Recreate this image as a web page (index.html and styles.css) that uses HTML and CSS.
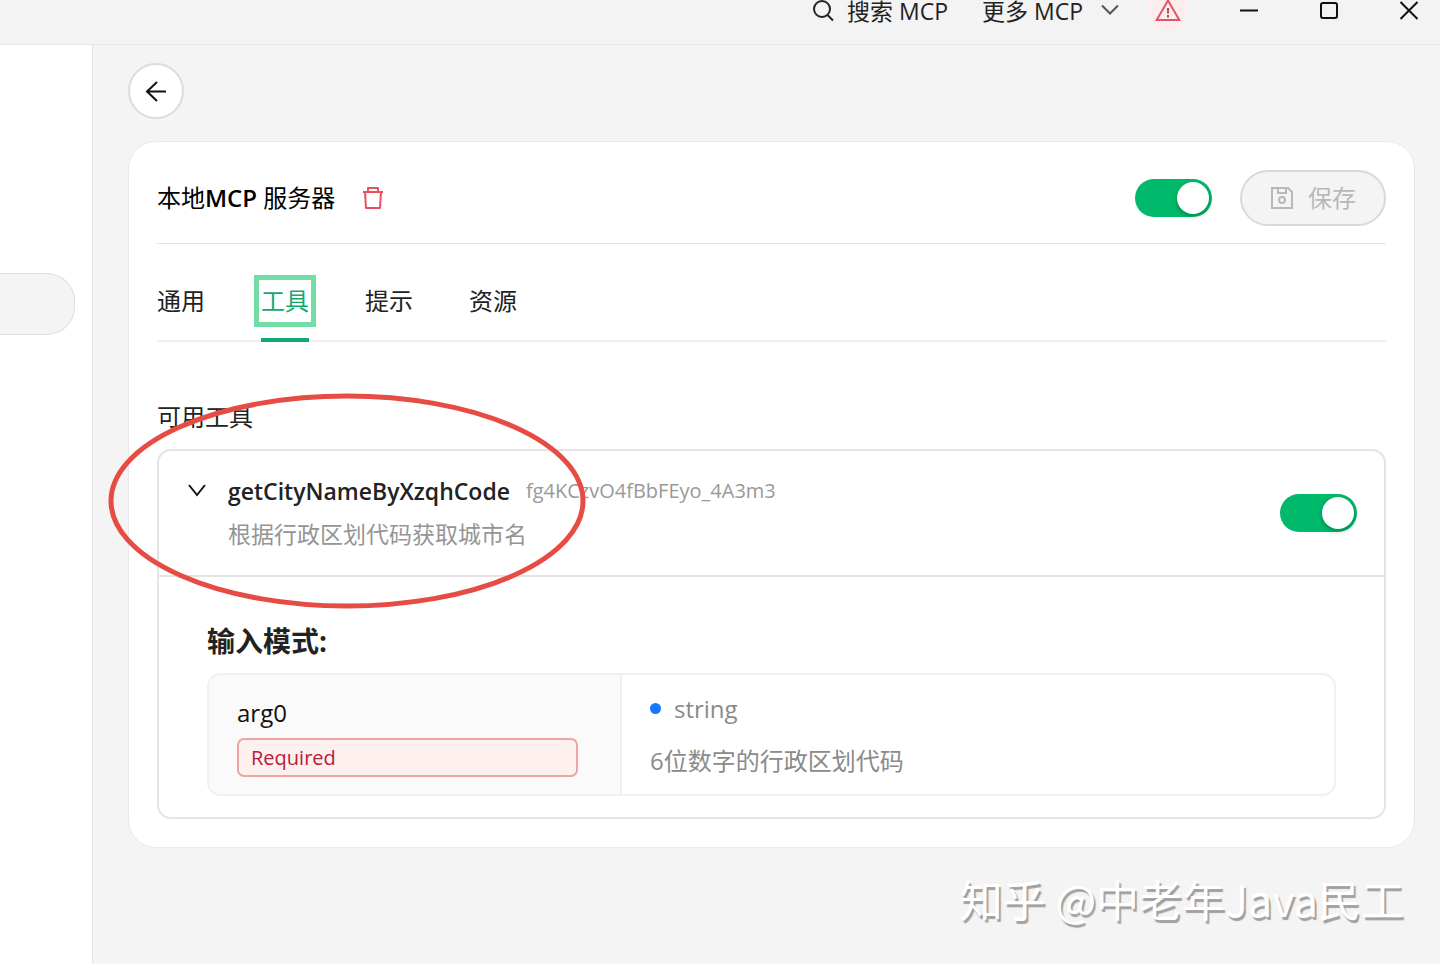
FILE: index.html
```html
<!DOCTYPE html>
<html lang="zh-CN">
<head>
<meta charset="utf-8">
<meta name="viewport" content="width=device-width, initial-scale=1">
<title>MCP 服务器</title>
<link rel="stylesheet" href="styles.css">
</head>
<body>
<div class="app">
  <header class="topbar">
    <button class="top-button search" type="button">
      <svg width="24" height="24" viewBox="0 0 24 24" fill="none" stroke="currentColor" stroke-width="2"><circle cx="11" cy="9" r="8"/><path d="M16.5 15 22 20.5"/></svg>
      <span>搜索 MCP</span>
    </button>
    <button class="top-button more" type="button">
      <span>更多 MCP</span>
      <svg width="20" height="20" viewBox="0 0 20 20" fill="none" stroke="#555" stroke-width="2"><path d="M2 5.500 10 13.500 18 5.500"/></svg>
    </button>
    <button class="top-button alert" type="button" aria-label="警告">
      <svg width="44" height="36" viewBox="0 0 44 36" fill="none"><circle cx="22" cy="11" r="20" fill="#fdeeed"/><path d="M22 0.500 33.300 20H10.700Z" stroke="#e0566a" stroke-width="2"/><path d="M22 8v5.500M22 15v2.500" stroke="#b5485a" stroke-width="2"/></svg>
    </button>
    <div class="window-controls">
      <button class="top-button" type="button" aria-label="最小化"><svg width="20" height="22" viewBox="0 0 20 22" stroke="#111" stroke-width="2"><path d="M1 10.500H19"/></svg></button>
      <button class="top-button" type="button" aria-label="最大化"><svg width="20" height="22" viewBox="0 0 20 22" fill="none" stroke="#111" stroke-width="2"><rect x="2" y="3" width="16" height="15" rx="2"/></svg></button>
      <button class="top-button" type="button" aria-label="关闭"><svg width="20" height="22" viewBox="0 0 20 22" stroke="#111" stroke-width="2"><path d="M1.500 2 18.500 19M18.500 2 1.500 19"/></svg></button>
    </div>
  </header>
  <div class="body">
    <aside class="sidebar"><div class="sidebar-item"></div></aside>
    <main class="main">
      <button class="back" type="button" aria-label="返回">
        <svg width="24" height="24" viewBox="0 0 24 24" fill="none" stroke="#111" stroke-width="2"><path d="M22 12.500H3M13 3 3 12.500 13 22"/></svg>
      </button>
      <section class="card">
        <div class="card-head">
          <h1 class="title">本地<b>MCP</b> 服务器</h1>
          <button class="delete" type="button" aria-label="删除">
            <svg width="22" height="24" viewBox="0 0 22 24" fill="none" stroke="#e94f5c" stroke-width="2"><path d="M1 6H21M6 6V2H16V6M3 6 4 22H18L19 6" stroke-linejoin="round"/></svg>
          </button>
          <input class="switch" type="checkbox" checked aria-label="启用服务器">
          <button class="save" type="button" disabled>
            <svg width="24" height="24" viewBox="0 0 24 24" fill="none" stroke="currentColor" stroke-width="2"><path d="M2 2H18L22 6V22H2ZM8 2V7H16V2"/><circle cx="12" cy="14" r="3"/></svg>
            <span>保存</span>
          </button>
        </div>
        <div class="tabs" role="tablist">
          <button class="tab" type="button" role="tab" aria-selected="false"><span class="tab-label">通用</span></button>
          <button class="tab active" type="button" role="tab" aria-selected="true"><span class="tab-label">工具</span></button>
          <button class="tab" type="button" role="tab" aria-selected="false"><span class="tab-label">提示</span></button>
          <button class="tab" type="button" role="tab" aria-selected="false"><span class="tab-label">资源</span></button>
        </div>
        <h2 class="section-title">可用工具</h2>
        <div class="tool">
          <div class="tool-head">
            <button class="collapse" type="button" aria-label="收起">
              <svg width="20" height="20" viewBox="0 0 20 20" fill="none" stroke="#111" stroke-width="2"><path d="M2 4 10 14 18 4"/></svg>
            </button>
            <div class="tool-text">
              <div class="tool-line"><span class="tool-name">getCityNameByXzqhCode</span><span class="tool-id">fg4KCzvO4fBbFEyo_4A3m3</span></div>
              <p class="tool-desc">根据行政区划代码获取城市名</p>
            </div>
            <input class="switch" type="checkbox" checked aria-label="启用工具">
          </div>
          <div class="tool-body">
            <h3 class="schema-title">输入模式:</h3>
            <table class="schema">
              <tr>
                <th class="param" scope="row"><span class="param-name">arg0</span><span class="required">Required</span></th>
                <td class="info"><div class="type"><i class="dot"></i>string</div><div class="hint">6位数字的行政区划代码</div></td>
              </tr>
            </table>
          </div>
          <svg class="annotation" width="478" height="216" viewBox="0 0 478 216" fill="none" stroke="#e64c44" stroke-width="5"><ellipse cx="239" cy="108" rx="236" ry="105"/></svg>
        </div>
      </section>
    </main>
  </div>
  <div class="watermark">知乎 @中老年Java民工</div>
</div>
</body>
</html>
```
FILE: styles.css
```css
* { box-sizing: border-box; }
body {
  margin: 0;
  background: #f4f4f4;
  color: #222;
  font: 400 24px/32px "Open Sans", "Noto Sans CJK SC", sans-serif;
}
button {
  margin: 0;
  padding: 0;
  border: 0;
  background: none;
  color: inherit;
  font: inherit;
}
svg { display: block; flex: none; }
h1, h2, h3, p { margin: 0; font-size: inherit; font-weight: inherit; }

.app {
  position: relative;
  display: flex;
  flex-direction: column;
  min-height: 100vh;
}
.topbar {
  display: flex;
  justify-content: flex-end;
  align-items: flex-start;
  height: 45px;
  padding-right: 21px;
  border-bottom: 1px solid #e8e8e8;
  background: #f3f3f3;
}
.top-button { display: flex; font-size: 23px; line-height: 23px; }
.search { gap: 12px; margin-right: 34px; }
.more { gap: 17px; margin-right: 26px; }
.alert { margin-right: 49px; }
.window-controls { display: flex; gap: 60px; }

.body { display: flex; flex: 1; }
.sidebar {
  flex: none;
  width: 93px;
  padding: 228px 17px 0 0;
  border-right: 1px solid #e6e6e6;
  background: #fff;
}
.sidebar-item {
  height: 62px;
  border: 1px solid #dedede;
  border-left: 0;
  border-radius: 0 28px 28px 0;
  background: #f4f4f4;
}
.main { flex: 1; min-width: 0; padding: 18px 25px 118px 35px; }
.back {
  display: flex;
  align-items: center;
  justify-content: center;
  width: 56px;
  height: 56px;
  margin-bottom: 22px;
  border: 2px solid #dcdcdc;
  border-radius: 50%;
  background: #fff;
}
.card {
  padding: 28px;
  border: 1px solid #e9e9e9;
  border-radius: 28px;
  background: #fff;
}
.card-head {
  display: flex;
  align-items: center;
  padding-bottom: 17px;
  border-bottom: 1px solid #e4e4e4;
}
.title { color: #000; }
.title b { font-weight: 600; }
.delete { margin: 0 auto 0 27px; }
.switch {
  flex: none;
  width: 77px;
  height: 38px;
  margin: 0;
  padding: 3px;
  border-radius: 19px;
  background: #00b96b;
  appearance: none;
}
.switch::before {
  display: block;
  width: 32px;
  height: 32px;
  margin-left: auto;
  border-radius: 50%;
  background: #fff;
  box-shadow: 0 2px 5px rgba(0, 60, 30, 0.4);
  content: "";
}
.save {
  display: flex;
  align-items: center;
  gap: 14px;
  height: 56px;
  margin-left: 28px;
  padding: 0 28px;
  border: 2px solid #d9d9d9;
  border-radius: 28px;
  background: #f4f4f4;
  color: #b8b8b8;
}
.tabs {
  display: flex;
  gap: 56px;
  padding-top: 38px;
  border-bottom: 2px solid #efefef;
}
.tab { padding-bottom: 18px; border-bottom: 4px solid transparent; margin-bottom: -2px; }
.tab-label { display: block; line-height: 38px; }
.active { border-bottom-color: #14a870; color: #14a870; }
.active .tab-label { outline: 5px solid #73dda7; outline-offset: 2px; }
.section-title { margin: 59px 0 16px; }

.tool {
  position: relative;
  border: 2px solid #e4e4e4;
  border-radius: 14px;
}
.tool-head {
  display: flex;
  align-items: center;
  padding: 19px 27px 19px 28px;
  border-bottom: 2px solid #e4e4e4;
}
.collapse { align-self: flex-start; margin: 11px 21px 0 0; }
.tool-text { flex: 1; min-width: 0; }
.tool-line { display: flex; gap: 16px; line-height: 42px; }
.tool-name { font-size: 23px; font-weight: 600; }
.tool-id { color: #999; font-size: 20px; }
.tool-desc { color: #959595; font-size: 23px; line-height: 44px; }
.tool-body { padding: 48px 48px 21px; }
.schema-title { margin-bottom: 16px; font-size: 28px; font-weight: 700; }
.schema {
  width: 100%;
  border: 2px solid #f0f0f0;
  border-radius: 14px;
  border-spacing: 0;
  table-layout: fixed;
}
.param {
  width: 413px;
  padding: 22px 42px 17px 28px;
  border-right: 2px solid #f0f0f0;
  border-radius: 12px 0 0 12px;
  background: #fafafa;
  font-weight: 400;
  text-align: left;
}
.param-name { display: block; margin-bottom: 9px; color: #111; }
.required {
  display: block;
  padding: 0 12px;
  border: 2px solid #efa3a3;
  border-radius: 7px;
  background: #fff0f0;
  color: #b3203c;
  font-size: 20px;
  line-height: 35px;
}
.info { padding: 0 28px; color: #8a8a8a; }
.type { display: flex; align-items: center; gap: 13px; margin-bottom: 20px; }
.dot { width: 11px; height: 11px; border-radius: 50%; background: #1677ff; }
.annotation {
  position: absolute;
  top: -58px;
  left: -51px;
  pointer-events: none;
}
.watermark {
  position: absolute;
  right: 36px;
  bottom: 38px;
  color: #fff;
  font: 400 43px/60px "Noto Sans CJK SC", sans-serif;
  text-shadow: 2px 3px 1px #a0a0a0;
}
```
